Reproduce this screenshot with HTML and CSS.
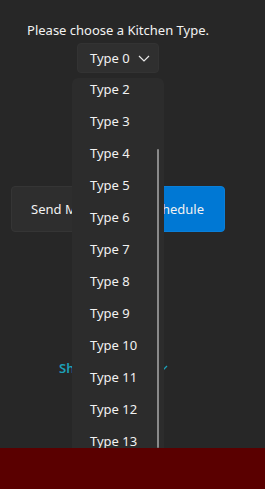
FILE: index.html
```html
<!DOCTYPE html>
<html lang="en">
  <head>
    <meta charset="UTF-8" />
    <meta name="viewport" content="width=device-width, initial-scale=1.0" />
    <title>Kitchen Type</title>
    <link rel="stylesheet" href="styles.css">
  </head>
  <body>
    <div class="page">
      <div class="content">
        <p class="prompt">Please choose a Kitchen Type.</p>
        <div class="combo">
          <span>Type 0</span>
          <svg class="chevron" width="12" height="7" viewBox="0 0 12 7">
            <path d="M1 1 L6 6 L11 1" fill="none" stroke="#e8e8e8" stroke-width="1.2" />
          </svg>
        </div>
        <div class="actions">
          <div class="btn">Send Message</div>
          <div class="btn primary">Schedule</div>
        </div>
        <div class="more">
          <span>Show advanced</span>
          <svg width="10" height="6" viewBox="0 0 10 6">
            <path d="M1 1 L5 5 L9 1" fill="none" stroke="#1ca0b8" stroke-width="1.3" />
          </svg>
        </div>
      </div>
      <div class="footer"></div>

      <div class="popup">
        <ul class="options">
          <li>Type 2</li>
          <li>Type 3</li>
          <li>Type 4</li>
          <li>Type 5</li>
          <li>Type 6</li>
          <li>Type 7</li>
          <li>Type 8</li>
          <li>Type 9</li>
          <li>Type 10</li>
          <li>Type 11</li>
          <li>Type 12</li>
          <li>Type 13</li>
        </ul>
        <div class="scrollbar"></div>
      </div>
    </div>
  </body>
</html>
```

FILE: styles.css
```css
* {
  margin: 0;
  padding: 0;
  box-sizing: border-box;
}

body {
  font-family: "Noto Sans", "Open Sans", sans-serif;
  font-size: 13px;
  background-color: #272727;
  color: #f2f2f2;
}

.page {
  position: relative;
  display: flex;
  flex-direction: column;
  min-height: 100vh;
}

/* column is centred on x = 118, not the window centre */
.content {
  flex: 1;
  display: flex;
  flex-direction: column;
  align-items: center;
  padding-right: 29px;
}

.prompt {
  margin-top: 21px;
  line-height: 18px;
}

.combo {
  margin-top: 4px;
  width: 82px;
  height: 30px;
  display: flex;
  align-items: center;
  padding-left: 12px;
  gap: 8px;
  background-color: #2f2f2f;
  border: 1px solid #333;
  border-radius: 4px;
}

.actions {
  align-self: flex-start;
  display: flex;
  gap: 8px;
  margin-top: 113px;
  padding-left: 11px;
}

.btn {
  height: 46px;
  width: 111px;
  display: flex;
  align-items: center;
  padding-left: 19px;
  white-space: nowrap;
  overflow: hidden;
  background-color: #2e2e2e;
  border: 1px solid #353535;
  border-radius: 4px;
}

.btn.primary {
  width: 95px;
  justify-content: flex-end;
  padding-left: 0;
  padding-right: 20px;
  background-color: #0078d4;
  border-color: #0a7fd8;
}

.more {
  align-self: flex-start;
  margin-top: 127px;
  margin-left: 59px;
  line-height: 18px;
  display: flex;
  align-items: center;
  gap: 1px;
  color: #1ca0b8;
  font-weight: 600;
}

.footer {
  height: 41px;
  background-color: #5a0000;
}

.popup {
  position: absolute;
  top: 78px;
  left: 72px;
  width: 92px;
  height: 370px;
  overflow: hidden;
  background-color: #2c2c2c;
  border-radius: 6px 6px 0 0;
}

.options {
  list-style: none;
  margin-top: -5px;
}

.options li {
  height: 32px;
  line-height: 32px;
  padding-left: 18px;
}

.scrollbar {
  position: absolute;
  left: 85px;
  top: 71px;
  bottom: 0;
  width: 2px;
  background-color: #8a8a8a;
  border-radius: 1px;
}
```
